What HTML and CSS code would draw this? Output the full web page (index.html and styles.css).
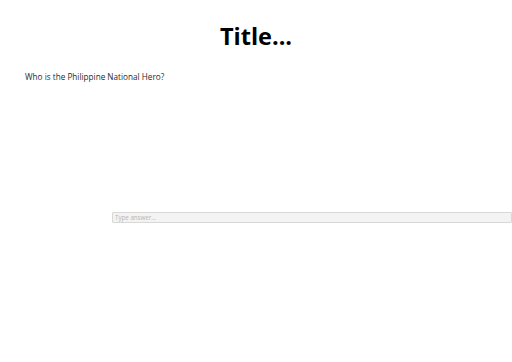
FILE: index.html
```html
<!DOCTYPE html>
<html>
<head>
<meta charset="utf-8">
<link rel="stylesheet" href="styles.css">
</head>
<body>
<h1 class="title">Title...</h1>
<p class="question">Who is the Philippine National Hero?</p>
<div class="answer-row">
  <input class="answer" type="text" placeholder="Type answer...">
</div>
</body>
</html>
```

FILE: styles.css
```css
html, body {
  margin: 0;
  padding: 0;
  background: #ffffff;
}
body {
  font-family: "Open Sans", sans-serif;
  color: #222;
}
.title {
  margin: 0;
  padding-top: 18px;
  text-align: center;
  font-size: 23.5px;
  font-weight: 700;
  line-height: 36px;
  color: #000;
}
.question {
  margin: 17px 0 0 25px;
  font-size: 8.2px;
  line-height: 12px;
  color: #2a2a2a;
}
.answer-row {
  margin-top: 129px;
  padding-left: 112px;
}
.answer {
  display: block;
  box-sizing: border-box;
  width: 400px;
  height: 11px;
  margin: 0;
  padding: 0 2px;
  border: 1px solid #d8d8d8;
  border-radius: 1px;
  background: #f3f3f3;
  font-family: "Open Sans", sans-serif;
  font-size: 6.2px;
  outline: none;
}
.answer::placeholder {
  color: #b5b5b5;
}
```
